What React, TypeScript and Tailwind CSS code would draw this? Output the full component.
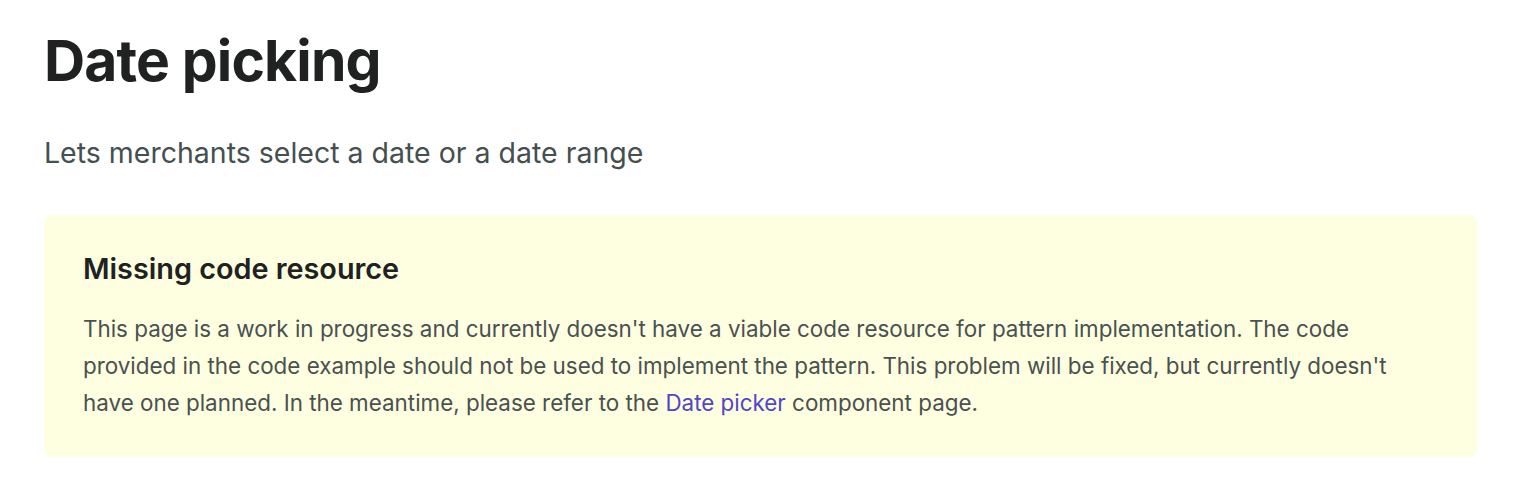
export default function App() {
  return (
    <div className="min-h-screen bg-white font-['Inter',sans-serif] pl-[44px] pr-[49px] pt-[32px] pb-[37px]">
      <h1 className="m-0 text-[57px] font-bold leading-none tracking-[-0.015em] text-[#202222]">
        Date picking
      </h1>
      <p className="mt-[50px] text-[28.5px] leading-none text-[#454f4f]">
        Lets merchants select a date or a date range
      </p>
      <div className="mt-[47px] rounded-lg bg-[#fefee0] pl-[39px] pr-[30px] pt-[40px] pb-[36px]">
        <h2 className="m-0 text-[28.8px] font-semibold leading-none text-[#202222]">
          Missing code resource
        </h2>
        <p className="mt-[27px] max-w-[1360px] text-[22.4px] leading-[37px] text-[#4a5151]">
          This page is a work in progress and currently doesn't have a viable code resource for pattern
          implementation. The code provided in the code example should not be used to implement the
          pattern. This problem will be fixed, but currently doesn't have one planned. In the meantime,
          please refer to the{" "}
          <a href="#" className="text-[#5046c8]">
            Date picker
          </a>{" "}
          component page.
        </p>
      </div>
    </div>
  );
}
